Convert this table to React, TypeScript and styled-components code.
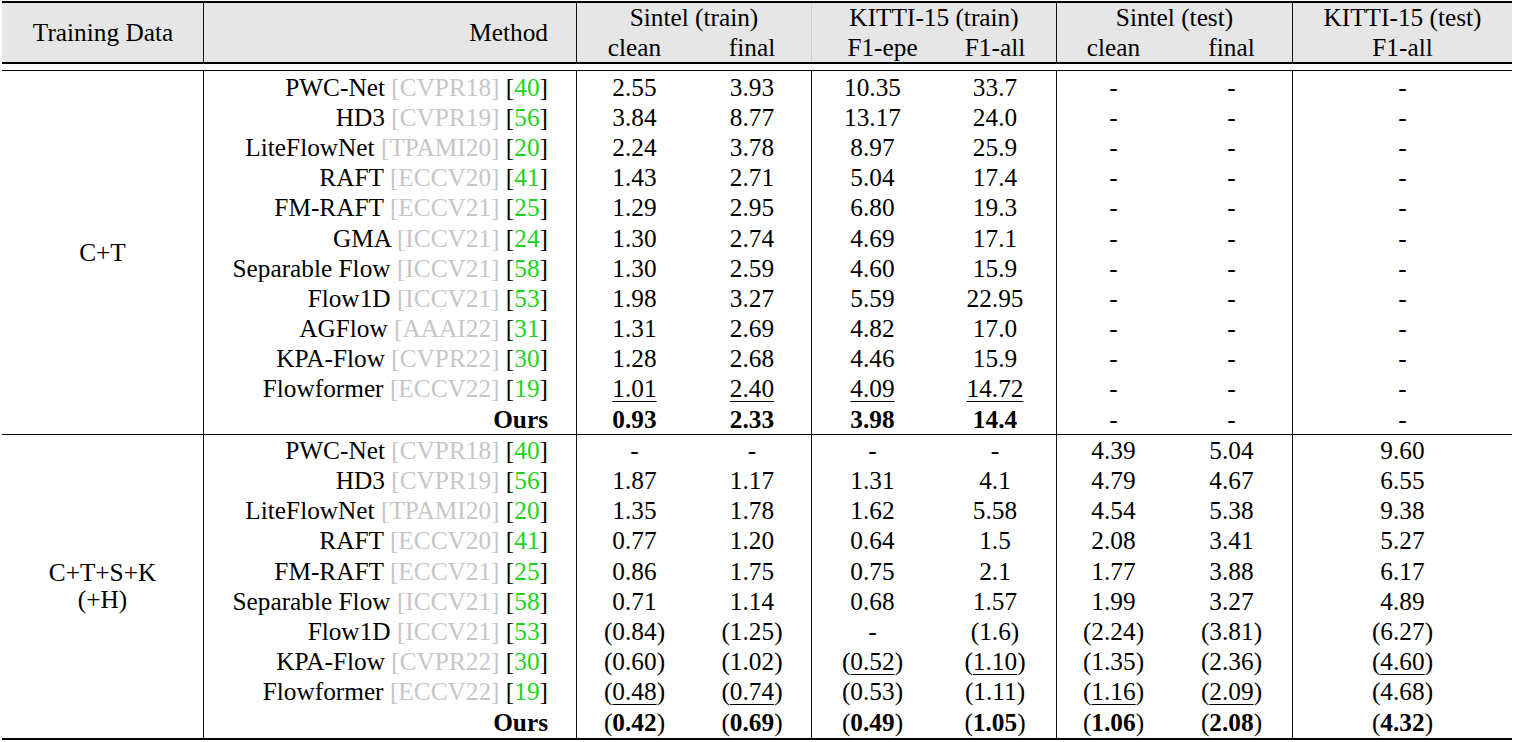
import React from 'react';
import styled, { createGlobalStyle } from 'styled-components';

const GlobalStyle = createGlobalStyle`
  html, body { margin: 0; padding: 0; background: #fff; }
  body {
    font-family: "Liberation Serif", "Times New Roman", serif;
    color: #000;
  }
`;

const NUM_COLS = '116px 119px 122px 123px 114px 122px 220px';
const HEAD_COLS = `201px 373px ${NUM_COLS}`;
const ROW_COLS = `373px ${NUM_COLS}`;
const ROW_H = 30.2;

type Sep = 'dark' | 'light' | 'none';
const sepColor = (s?: Sep) =>
  s === 'dark' ? '1px solid #111' : s === 'light' ? '1px solid #cfcfcf' : '1px solid transparent';

const Table = styled.div`
  width: 1510px;
  margin: 1px 0 0 2px;
  font-size: 25.3px;
`;

const Header = styled.div`
  display: grid;
  grid-template-columns: ${HEAD_COLS};
  grid-template-rows: 29.5px 29.5px;
  background: #e6e6e6;
  border-top: 2px solid #000;
  border-bottom: 2px solid #000;
`;

const HeadCell = styled.div<{
  $col: string;
  $row: string;
  $align?: 'center' | 'right';
  $sep?: Sep;
  $shift?: number;
}>`
  grid-column: ${(p) => p.$col};
  grid-row: ${(p) => p.$row};
  display: flex;
  align-items: center;
  justify-content: ${(p) => (p.$align === 'right' ? 'flex-end' : 'center')};
  padding-right: ${(p) => (p.$align === 'right' ? '28px' : '0')};
  padding-left: ${(p) => p.$shift || 0}px;
  border-left: ${(p) => sepColor(p.$sep)};
  white-space: nowrap;
`;

const Body = styled.div`
  margin-top: 6px;
  border-top: 1.5px solid #000;
`;

const Block = styled.div<{ $last?: boolean }>`
  display: flex;
  border-bottom: ${(p) => (p.$last ? '2px' : '1.5px')} solid #000;
`;

const LabelCell = styled.div`
  width: 201px;
  flex: none;
  display: flex;
  flex-direction: column;
  align-items: center;
  justify-content: center;
  line-height: 27px;
`;

const Rows = styled.div`
  flex: 1;
  display: flex;
  flex-direction: column;
`;

const Row = styled.div<{ $padTop?: number; $padBottom?: number }>`
  display: grid;
  grid-template-columns: ${ROW_COLS};
  height: ${(p) => ROW_H + (p.$padTop || 0) + (p.$padBottom || 0)}px;
`;

const Cell = styled.div<{ $sep?: Sep; $padTop?: number; $padBottom?: number }>`
  display: flex;
  align-items: center;
  justify-content: center;
  border-left: ${(p) => sepColor(p.$sep)};
  padding-top: ${(p) => p.$padTop || 0}px;
  padding-bottom: ${(p) => p.$padBottom || 0}px;
  white-space: nowrap;
`;

const MethodCell = styled(Cell)`
  justify-content: flex-end;
  padding-right: 28px;
`;

const Venue = styled.span`
  color: #c6c6c6;
`;

const RefNum = styled.span`
  color: #1fd21f;
`;

const Bold = styled.span`
  font-weight: 700;
`;

const Under = styled.span`
  text-decoration: underline;
  text-decoration-thickness: 1px;
  text-underline-offset: 4px;
`;

type Method = { name: string; venue?: string; ref?: string; bold?: boolean };

const Value: React.FC<{ v: string }> = ({ v }) => {
  const m = v.match(/^(\()?([_*]?)([^()_*]+)[_*]?(\))?$/);
  if (!m) return <>{v}</>;
  const [, open, mark, num, close] = m;
  let inner: React.ReactNode = num;
  if (mark === '_') inner = <Under>{num}</Under>;
  if (mark === '*') inner = <Bold>{num}</Bold>;
  return (
    <span>
      {open}
      {inner}
      {close}
    </span>
  );
};

const MethodLabel: React.FC<{ m: Method }> = ({ m }) =>
  m.bold ? (
    <Bold>{m.name}</Bold>
  ) : (
    <span>
      {m.name} <Venue>[{m.venue}]</Venue> [<RefNum>{m.ref}</RefNum>]
    </span>
  );

const SEPS: Sep[] = ['dark', 'none', 'dark', 'none', 'dark', 'none', 'dark'];

type RowData = { m: Method; v: string[] };

const block1: RowData[] = [
  { m: { name: 'PWC-Net', venue: 'CVPR18', ref: '40' }, v: ['2.55', '3.93', '10.35', '33.7', '-', '-', '-'] },
  { m: { name: 'HD3', venue: 'CVPR19', ref: '56' }, v: ['3.84', '8.77', '13.17', '24.0', '-', '-', '-'] },
  { m: { name: 'LiteFlowNet', venue: 'TPAMI20', ref: '20' }, v: ['2.24', '3.78', '8.97', '25.9', '-', '-', '-'] },
  { m: { name: 'RAFT', venue: 'ECCV20', ref: '41' }, v: ['1.43', '2.71', '5.04', '17.4', '-', '-', '-'] },
  { m: { name: 'FM-RAFT', venue: 'ECCV21', ref: '25' }, v: ['1.29', '2.95', '6.80', '19.3', '-', '-', '-'] },
  { m: { name: 'GMA', venue: 'ICCV21', ref: '24' }, v: ['1.30', '2.74', '4.69', '17.1', '-', '-', '-'] },
  { m: { name: 'Separable Flow', venue: 'ICCV21', ref: '58' }, v: ['1.30', '2.59', '4.60', '15.9', '-', '-', '-'] },
  { m: { name: 'Flow1D', venue: 'ICCV21', ref: '53' }, v: ['1.98', '3.27', '5.59', '22.95', '-', '-', '-'] },
  { m: { name: 'AGFlow', venue: 'AAAI22', ref: '31' }, v: ['1.31', '2.69', '4.82', '17.0', '-', '-', '-'] },
  { m: { name: 'KPA-Flow', venue: 'CVPR22', ref: '30' }, v: ['1.28', '2.68', '4.46', '15.9', '-', '-', '-'] },
  { m: { name: 'Flowformer', venue: 'ECCV22', ref: '19' }, v: ['_1.01_', '_2.40_', '_4.09_', '_14.72_', '-', '-', '-'] },
  { m: { name: 'Ours', bold: true }, v: ['*0.93*', '*2.33*', '*3.98*', '*14.4*', '-', '-', '-'] },
];

const block2: RowData[] = [
  { m: { name: 'PWC-Net', venue: 'CVPR18', ref: '40' }, v: ['-', '-', '-', '-', '4.39', '5.04', '9.60'] },
  { m: { name: 'HD3', venue: 'CVPR19', ref: '56' }, v: ['1.87', '1.17', '1.31', '4.1', '4.79', '4.67', '6.55'] },
  { m: { name: 'LiteFlowNet', venue: 'TPAMI20', ref: '20' }, v: ['1.35', '1.78', '1.62', '5.58', '4.54', '5.38', '9.38'] },
  { m: { name: 'RAFT', venue: 'ECCV20', ref: '41' }, v: ['0.77', '1.20', '0.64', '1.5', '2.08', '3.41', '5.27'] },
  { m: { name: 'FM-RAFT', venue: 'ECCV21', ref: '25' }, v: ['0.86', '1.75', '0.75', '2.1', '1.77', '3.88', '6.17'] },
  { m: { name: 'Separable Flow', venue: 'ICCV21', ref: '58' }, v: ['0.71', '1.14', '0.68', '1.57', '1.99', '3.27', '4.89'] },
  { m: { name: 'Flow1D', venue: 'ICCV21', ref: '53' }, v: ['(0.84)', '(1.25)', '-', '(1.6)', '(2.24)', '(3.81)', '(6.27)'] },
  { m: { name: 'KPA-Flow', venue: 'CVPR22', ref: '30' }, v: ['(0.60)', '(1.02)', '(_0.52_)', '(_1.10_)', '(1.35)', '(2.36)', '(_4.60_)'] },
  { m: { name: 'Flowformer', venue: 'ECCV22', ref: '19' }, v: ['(_0.48_)', '(_0.74_)', '(0.53)', '(1.11)', '(_1.16_)', '(_2.09_)', '(4.68)'] },
  { m: { name: 'Ours', bold: true }, v: ['(*0.42*)', '(*0.69*)', '(*0.49*)', '(*1.05*)', '(*1.06*)', '(*2.08*)', '(*4.32*)'] },
];

const DataBlock: React.FC<{ label: string[]; rows: RowData[]; last?: boolean; padTop: number; padBottom: number }> = ({
  label,
  rows,
  last,
  padTop,
  padBottom,
}) => (
  <Block $last={last}>
    <LabelCell>
      {label.map((l) => (
        <div key={l}>{l}</div>
      ))}
    </LabelCell>
    <Rows>
      {rows.map((r, i) => {
        const pt = i === 0 ? padTop : 0;
        const pb = i === rows.length - 1 ? padBottom : 0;
        return (
          <Row key={i} $padTop={pt} $padBottom={pb}>
            <MethodCell $sep="dark" $padTop={pt} $padBottom={pb}>
              <MethodLabel m={r.m} />
            </MethodCell>
            {r.v.map((v, j) => (
              <Cell key={j} $sep={SEPS[j]} $padTop={pt} $padBottom={pb}>
                <Value v={v} />
              </Cell>
            ))}
          </Row>
        );
      })}
    </Rows>
  </Block>
);

export default function App() {
  return (
    <>
      <GlobalStyle />
      <Table>
        <Header>
          <HeadCell $col="1" $row="1 / 3">Training Data</HeadCell>
          <HeadCell $col="2" $row="1 / 3" $align="right" $sep="dark">Method</HeadCell>
          <HeadCell $col="3 / 5" $row="1" $sep="dark">Sintel (train)</HeadCell>
          <HeadCell $col="3" $row="2" $sep="dark">clean</HeadCell>
          <HeadCell $col="4" $row="2">final</HeadCell>
          <HeadCell $col="5 / 7" $row="1" $sep="light">KITTI-15 (train)</HeadCell>
          <HeadCell $col="5" $row="2" $sep="light" $shift={20}>F1-epe</HeadCell>
          <HeadCell $col="6" $row="2">F1-all</HeadCell>
          <HeadCell $col="7 / 9" $row="1" $sep="dark">Sintel (test)</HeadCell>
          <HeadCell $col="7" $row="2" $sep="dark">clean</HeadCell>
          <HeadCell $col="8" $row="2">final</HeadCell>
          <HeadCell $col="9" $row="1" $sep="dark">KITTI-15 (test)</HeadCell>
          <HeadCell $col="9" $row="2" $sep="dark">F1-all</HeadCell>
        </Header>
        <Body>
          <DataBlock label={['C+T']} rows={block1} padTop={1} padBottom={0} />
          <DataBlock label={['C+T+S+K', '(+H)']} rows={block2} last padTop={0} padBottom={0.5} />
        </Body>
      </Table>
    </>
  );
}
